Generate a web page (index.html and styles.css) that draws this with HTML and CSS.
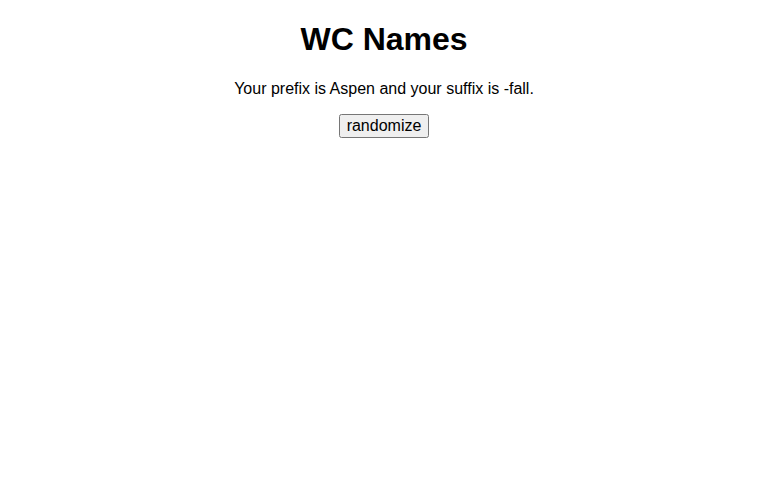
FILE: index.html
```html
<!DOCTYPE html>
<html lang="en">
<head>
    <meta charset="UTF-8">
    <meta name="viewport" content="width=device-width, initial-scale=1.0">
    <title>WC Names</title>
    <link rel="stylesheet" href="styles.css">
</head>
<body>
    <div class="name-container">
        <h1>WC Names</h1>
        <p id="nameText">Your prefix is Aspen and your suffix is -fall.</p>
        <button class="btn" onclick="randomize()">randomize</button>
    </div>

    <script>
        const prefixes = ['Aspen', 'Bramble', 'Cinder', 'Dove', 'Fern', 'Hawk', 'Jay', 'Moss', 'Rain', 'Thorn'];
        const suffixes = ['fall', 'claw', 'fur', 'heart', 'leaf', 'pelt', 'stripe', 'tail', 'whisker', 'wing'];

        function randomize() {
            const prefix = prefixes[Math.floor(Math.random() * prefixes.length)];
            const suffix = suffixes[Math.floor(Math.random() * suffixes.length)];
            document.getElementById('nameText').textContent =
                'Your prefix is ' + prefix + ' and your suffix is -' + suffix + '.';
        }
    </script>
</body>
</html>
```

FILE: styles.css
```css
body {
    margin: 0;
    font-family: 'Liberation Sans', Arial, sans-serif;
    color: #000;
    background-color: #fff;
}

.name-container {
    text-align: center;
}

h1 {
    font-size: 2em;
    margin: 0.67em 0;
}

p {
    font-size: 16px;
    margin: 16px 0;
}

.btn {
    font-family: inherit;
    font-size: 16px;
    padding: 1px 6px;
}
```
